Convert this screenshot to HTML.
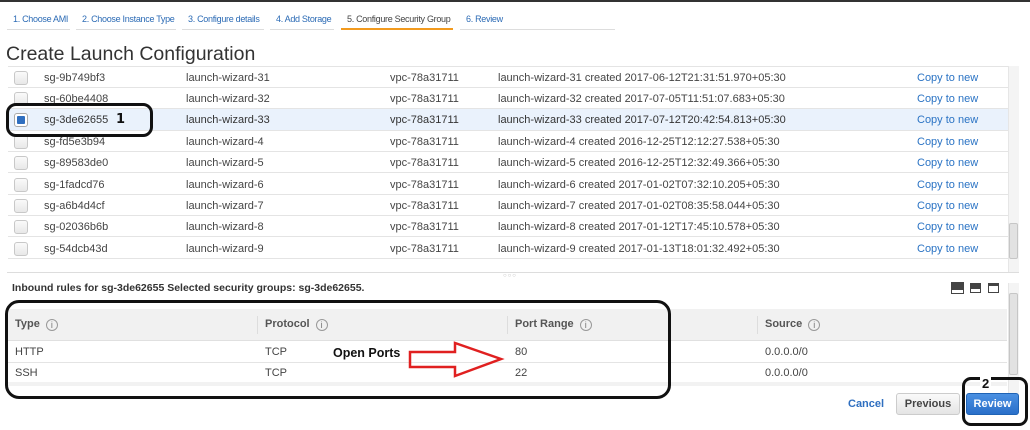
<!DOCTYPE html>
<html><head><meta charset="utf-8"><style>
*{margin:0;padding:0;box-sizing:border-box}
body{width:1030px;height:430px;overflow:hidden;background:#fff;font-family:"Liberation Sans",Arial,sans-serif;color:#444;position:relative;font-size:11px}
.a{position:absolute;white-space:nowrap}
.tab{position:absolute;top:14px;height:16px;border-bottom:1px solid #ddd;color:#2c6bb5;font-size:9px;letter-spacing:-0.3px;padding-left:6px;white-space:nowrap}
.row{position:absolute;left:8px;width:1000px;height:21px;border-bottom:1px solid #e4e4e4}
.row span{position:absolute;top:5px;font-size:11px;white-space:nowrap}
.cb{position:absolute;left:6px;top:4px;width:14px;height:14px;border:1px solid #c8c8c8;border-radius:3px;background:linear-gradient(#fafafa,#e8e8e8)}
.lnk{color:#2a73c4}
.info{display:inline-block;width:12px;height:12px;border:1px solid #999;border-radius:50%;font-size:9px;text-align:center;line-height:10px;color:#777;font-weight:normal;margin-left:6px;vertical-align:-1px}
</style></head><body>
<div class="a" style="left:0;top:0;width:1030px;height:2px;background:#333"></div>
<div class="tab" style="left:7px;width:63px">1. Choose AMI</div>
<div class="tab" style="left:76px;width:100px">2. Choose Instance Type</div>
<div class="tab" style="left:182px;width:82px">3. Configure details</div>
<div class="tab" style="left:270px;width:64px">4. Add Storage</div>
<div class="tab" style="left:341px;width:112px;border-bottom:2px solid #f29a1e;color:#444">5. Configure Security Group</div>
<div class="tab" style="left:460px;width:48px">6. Review</div>
<div class="tab" style="left:508px;width:107px;padding:0"></div>
<div class="a" style="left:6px;top:43px;font-size:19.5px;color:#333">Create Launch Configuration</div>
<div class="a" style="left:8px;top:66px;width:1000px;height:1px;background:#e4e4e4"></div>

<div class="row" style="top:67px"><div class="cb"></div><span style="left:36px">sg-9b749bf3</span><span style="left:178px">launch-wizard-31</span><span style="left:382px">vpc-78a31711</span><span style="left:490px">launch-wizard-31 created 2017-06-12T21:31:51.970+05:30</span><span class="lnk" style="left:909px">Copy to new</span></div>
<div class="row" style="top:88px"><div class="cb"></div><span style="left:36px">sg-60be4408</span><span style="left:178px">launch-wizard-32</span><span style="left:382px">vpc-78a31711</span><span style="left:490px">launch-wizard-32 created 2017-07-05T11:51:07.683+05:30</span><span class="lnk" style="left:909px">Copy to new</span></div>
<div class="row" style="top:109px;background:#eaf2fc;height:22px"><div class="cb" style="border-color:#aaa;background:#fff"><div style="position:absolute;left:2px;top:2px;width:8px;height:8px;background:#2f6fc0;border-radius:1px"></div></div><span style="left:36px;color:#333">sg-3de62655</span><span style="left:178px;color:#333">launch-wizard-33</span><span style="left:382px;color:#333">vpc-78a31711</span><span style="left:490px;color:#333">launch-wizard-33 created 2017-07-12T20:42:54.813+05:30</span><span class="lnk" style="left:909px">Copy to new</span></div>
<div class="row" style="top:131px"><div class="cb"></div><span style="left:36px">sg-fd5e3b94</span><span style="left:178px">launch-wizard-4</span><span style="left:382px">vpc-78a31711</span><span style="left:490px">launch-wizard-4 created 2016-12-25T12:12:27.538+05:30</span><span class="lnk" style="left:909px">Copy to new</span></div>
<div class="row" style="top:152px"><div class="cb"></div><span style="left:36px">sg-89583de0</span><span style="left:178px">launch-wizard-5</span><span style="left:382px">vpc-78a31711</span><span style="left:490px">launch-wizard-5 created 2016-12-25T12:32:49.366+05:30</span><span class="lnk" style="left:909px">Copy to new</span></div>
<div class="row" style="top:174px"><div class="cb"></div><span style="left:36px">sg-1fadcd76</span><span style="left:178px">launch-wizard-6</span><span style="left:382px">vpc-78a31711</span><span style="left:490px">launch-wizard-6 created 2017-01-02T07:32:10.205+05:30</span><span class="lnk" style="left:909px">Copy to new</span></div>
<div class="row" style="top:195px"><div class="cb"></div><span style="left:36px">sg-a6b4d4cf</span><span style="left:178px">launch-wizard-7</span><span style="left:382px">vpc-78a31711</span><span style="left:490px">launch-wizard-7 created 2017-01-02T08:35:58.044+05:30</span><span class="lnk" style="left:909px">Copy to new</span></div>
<div class="row" style="top:216px"><div class="cb"></div><span style="left:36px">sg-02036b6b</span><span style="left:178px">launch-wizard-8</span><span style="left:382px">vpc-78a31711</span><span style="left:490px">launch-wizard-8 created 2017-01-12T17:45:10.578+05:30</span><span class="lnk" style="left:909px">Copy to new</span></div>
<div class="row" style="top:238px"><div class="cb"></div><span style="left:36px">sg-54dcb43d</span><span style="left:178px">launch-wizard-9</span><span style="left:382px">vpc-78a31711</span><span style="left:490px">launch-wizard-9 created 2017-01-13T18:01:32.492+05:30</span><span class="lnk" style="left:909px">Copy to new</span></div>

<div class="a" style="left:1008px;top:66px;width:11px;height:206px;background:#f4f4f4;border-left:1px solid #e6e6e6"></div>
<div class="a" style="left:1009px;top:223px;width:9px;height:36px;background:#e2e2e2;border:1px solid #c6c6c6;border-radius:2px"></div>

<div class="a" style="left:6px;top:103px;width:147px;height:34px;border:3px solid #111;border-radius:10px"></div>
<div class="a" style="left:116px;top:112px;font-weight:bold;font-size:13px;color:#111;font-family:'DejaVu Sans',sans-serif">1</div>

<div class="a" style="left:7px;top:272px;width:1012px;height:1px;background:#ddd"></div>
<div class="a" style="left:503px;top:273px;font-size:6px;color:#bbb;letter-spacing:1px">○○○</div>
<div class="a" style="left:12px;top:282px;font-size:10.5px;font-weight:bold;color:#333">Inbound rules for sg-3de62655 Selected security groups: sg-3de62655.</div>
<div class="a" style="left:952px;top:283px;width:11px;height:10px;background:#444;border-bottom:3px solid #fff;outline:1px solid #444"></div>
<div class="a" style="left:970px;top:283px;width:11px;height:10px;border:1px solid #444;background:linear-gradient(#444 60%,#fff 60%)"></div>
<div class="a" style="left:988px;top:283px;width:11px;height:10px;border:1px solid #444;border-top:3px solid #444"></div>

<div class="a" style="left:8px;top:309px;width:999px;height:32px;background:#f1f1f1;border-bottom:1px solid #e0e0e0"></div>
<div class="a" style="left:257px;top:316px;width:1px;height:18px;background:#ddd"></div>
<div class="a" style="left:507px;top:316px;width:1px;height:18px;background:#ddd"></div>
<div class="a" style="left:757px;top:316px;width:1px;height:18px;background:#ddd"></div>
<div class="a" style="left:15px;top:318px;font-weight:bold;font-size:11px;color:#555">Type<span class="info">i</span></div>
<div class="a" style="left:265px;top:318px;font-weight:bold;font-size:11px;color:#555">Protocol<span class="info">i</span></div>
<div class="a" style="left:515px;top:318px;font-weight:bold;font-size:11px;color:#555">Port Range<span class="info">i</span></div>
<div class="a" style="left:765px;top:318px;font-weight:bold;font-size:11px;color:#555">Source<span class="info">i</span></div>
<div class="a" style="left:8px;top:362px;width:999px;height:1px;background:#e4e4e4"></div>
<div class="a" style="left:8px;top:382px;width:999px;height:4px;background:#f2f2f2"></div>
<div class="a" style="left:15px;top:346px">HTTP</div><div class="a" style="left:265px;top:346px">TCP</div><div class="a" style="left:515px;top:346px">80</div><div class="a" style="left:765px;top:346px">0.0.0.0/0</div>
<div class="a" style="left:15px;top:367px">SSH</div><div class="a" style="left:265px;top:367px">TCP</div><div class="a" style="left:515px;top:367px">22</div><div class="a" style="left:765px;top:367px">0.0.0.0/0</div>
<div class="a" style="left:1008px;top:283px;width:11px;height:115px;background:#f4f4f4;border-left:1px solid #e6e6e6"></div>
<div class="a" style="left:1009px;top:293px;width:9px;height:82px;background:#e2e2e2;border:1px solid #c6c6c6;border-radius:2px"></div>

<div class="a" style="left:5px;top:300px;width:666px;height:99px;border:3px solid #111;border-radius:14px"></div>
<div class="a" style="left:333px;top:346px;font-weight:bold;font-size:12.5px;color:#111">Open Ports</div>
<svg class="a" style="left:405px;top:340px" width="102" height="40"><path d="M5 12 H50 V3 L96 19 L50 36 V27 H5 Z" fill="none" stroke="#e02020" stroke-width="2.5" stroke-linejoin="miter"/></svg>

<div class="a" style="left:848px;top:398px;font-weight:bold;color:#2f6fc0;font-size:11px">Cancel</div>
<div class="a" style="left:896px;top:393px;width:64px;height:22px;border:1px solid #ccc;border-radius:3px;background:linear-gradient(#fafafa,#e4e4e4);font-weight:bold;color:#444;text-align:center;line-height:20px;font-size:11px">Previous</div>
<div class="a" style="left:966px;top:393px;width:53px;height:22px;border:1px solid #1f63b5;border-radius:3px;background:linear-gradient(#4a90e2,#2a6fc9);font-weight:bold;color:#fff;text-align:center;line-height:20px;font-size:11px">Review</div>
<div class="a" style="left:962px;top:377px;width:66px;height:49px;border:3px solid #111;border-radius:9px"></div>
<div class="a" style="left:980px;top:377px;font-weight:bold;font-size:13px;color:#111;background:#fff;line-height:14px;padding:0 2px">2</div>
</body></html>
